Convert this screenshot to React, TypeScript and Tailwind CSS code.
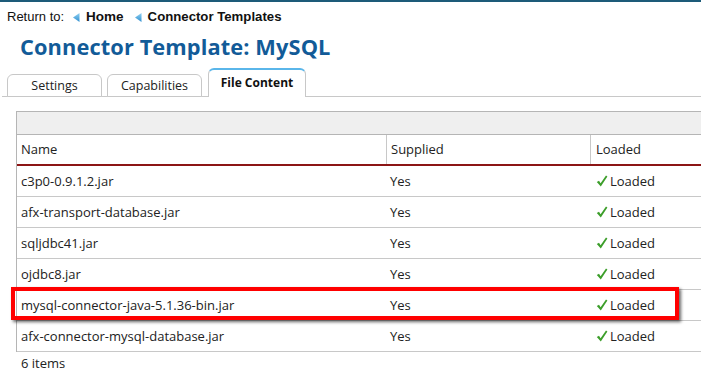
import React from "react";

const rows = [
  "c3p0-0.9.1.2.jar",
  "afx-transport-database.jar",
  "sqljdbc41.jar",
  "ojdbc8.jar",
  "mysql-connector-java-5.1.36-bin.jar",
  "afx-connector-mysql-database.jar",
];

function Tri() {
  return (
    <svg width="7" height="9" viewBox="0 0 7 9" className="mx-[5px]">
      <defs>
        <linearGradient id="tg" x1="0" y1="0" x2="0" y2="1">
          <stop offset="0" stopColor="#8fd0f2" />
          <stop offset="1" stopColor="#2f8fd0" />
        </linearGradient>
      </defs>
      <polygon points="0,4.5 6.5,0 6.5,9" fill="url(#tg)" />
    </svg>
  );
}

function Check() {
  return (
    <svg width="12" height="12" viewBox="0 0 12 12" className="mr-[2px] -mt-[2px]">
      <path d="M0.8 7 L3 5.8 L4.6 8.2 L10 0.6 L11.4 1.6 L4.8 11.4 Z" fill="#3c9e2a" />
    </svg>
  );
}

export default function App() {
  const cell = "font-['Open_Sans',sans-serif] text-[13px] text-[#222]";
  return (
    <div className="w-[701px] h-[391px] bg-white overflow-hidden relative">
      <div className="h-[2px] bg-[#1d5b79]" />
      <div className="mt-[6px] h-[18px] flex items-center pl-[7px] font-['Liberation_Sans',Arial,sans-serif] text-[13px] text-[#111]">
        <span>Return to:</span>
        <span className="ml-[4px]" />
        <Tri />
        <span className="font-bold text-[13.5px] ml-[1px]">Home</span>
        <span className="ml-[6px]" />
        <Tri />
        <span className="font-bold text-[13.2px] ml-[1px]">Connector Templates</span>
      </div>
      <div className="mt-[7px] h-[28px] leading-[28px] pl-[20px] font-['Open_Sans',sans-serif] font-bold text-[21.8px] tracking-[0.1px] text-[#125b98]">
        Connector Template: MySQL
      </div>
      <div className="mt-[7px] h-[29px] ml-[2px] flex items-end border-b border-[#c8c8c8]">
        <div className="ml-[5px] w-[95px] h-[23px] -mb-px border border-[#c8c8c8] rounded-t-[6px] bg-white flex items-center justify-center pt-[2px] font-['Open_Sans',sans-serif] text-[12.5px] text-[#222]">
          Settings
        </div>
        <div className="ml-[5px] w-[95px] h-[23px] -mb-px border border-[#c8c8c8] rounded-t-[6px] bg-white flex items-center justify-center pt-[2px] font-['Open_Sans',sans-serif] text-[12.5px] text-[#222]">
          Capabilities
        </div>
        <div className="ml-[6px] w-[98px] h-[29px] -mb-px border border-b-0 border-[#c8c8c8] border-t-[2px] border-t-[#5ab6ea] rounded-t-[6px] bg-white flex items-start pt-[4px] justify-center font-['Open_Sans',sans-serif] font-bold text-[12px] text-[#111]">
          File Content
        </div>
      </div>

      <div className="mt-[14px] ml-[16px] w-[780px] border-l border-[#b5b5b5]">
        <div className="h-[24px] bg-[#efefef] border-t border-b border-[#b5b5b5]" />
        <div className="flex h-[31px] border-b-2 border-[#8c1515]">
          <div className={`w-[369px] pl-[4px] flex items-center ${cell}`}>Name</div>
          <div className={`w-[204px] pl-[4px] flex items-center border-l border-[#c8c8c8] ${cell}`}>Supplied</div>
          <div className={`flex-1 pl-[5px] flex items-center border-l border-[#c8c8c8] ${cell}`}>Loaded</div>
        </div>
        {rows.map((r, i) => (
          <div key={r} className="relative flex h-[31px] border-b border-[#c8c8c8]">
            <div className={`w-[369px] pl-[4px] pt-[1px] flex items-center ${cell}`}>{r}</div>
            <div className={`w-[205px] pl-[4px] pt-[1px] flex items-center ${cell}`}>Yes</div>
            <div className={`flex-1 pl-[5px] pt-[1px] flex items-center ${cell}`}>
              <Check />
              Loaded
            </div>
            {i === 4 && (
              <div className="absolute left-[-6px] top-[-3px] w-[668px] h-[33px] border-[4px] border-[#ff0000] shadow-[2px_2px_3px_rgba(0,0,0,0.6)]" />
            )}
          </div>
        ))}
      </div>
      <div className={`h-[22px] leading-[22px] pl-[21px] ${cell}`}>6 items</div>
    </div>
  );
}
